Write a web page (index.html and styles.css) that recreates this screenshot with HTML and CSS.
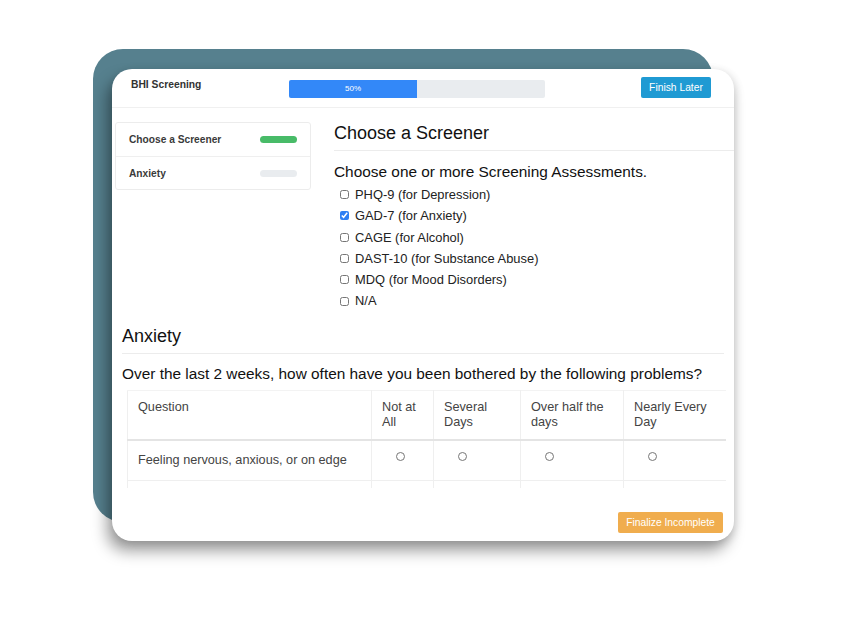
FILE: index.html
```html
<!DOCTYPE html>
<html lang="en">

<head>
    <meta charset="UTF-8">
    <meta name="viewport" content="width=device-width, initial-scale=1.0">
    <title>BHI Screening</title>
    <link rel="stylesheet" href="styles.css">
</head>

<body>

    <div class="stage">
        <div class="card">

            <header class="top">
                <div class="brand">BHI Screening</div>
                <div class="progress">
                    <div class="progress-fill" style="width: 50%">50%</div>
                </div>
                <button class="btn btn-info">Finish Later</button>
            </header>

            <div class="upper">
                <ul class="steps">
                    <li>
                        <span>Choose a Screener</span>
                        <i class="bar done"></i>
                    </li>
                    <li>
                        <span>Anxiety</span>
                        <i class="bar"></i>
                    </li>
                </ul>

                <div class="screener">
                    <h2>Choose a Screener</h2>
                    <p class="lead">Choose one or more Screening Assessments.</p>
                    <ul class="checks">
                        <li><label><input type="checkbox"> PHQ-9 (for Depression)</label></li>
                        <li><label><input type="checkbox" checked> GAD-7 (for Anxiety)</label></li>
                        <li><label><input type="checkbox"> CAGE (for Alcohol)</label></li>
                        <li><label><input type="checkbox"> DAST-10 (for Substance Abuse)</label></li>
                        <li><label><input type="checkbox"> MDQ (for Mood Disorders)</label></li>
                        <li><label><input type="checkbox"> N/A</label></li>
                    </ul>
                </div>
            </div>

            <div class="anxiety">
                <h2>Anxiety</h2>
                <p class="lead">Over the last 2 weeks, how often have you been bothered by the following problems?</p>

                <div class="table-wrap">
                    <table>
                        <thead>
                            <tr>
                                <th class="c1">Question</th>
                                <th class="c2">Not at All</th>
                                <th class="c3">Several Days</th>
                                <th class="c4">Over half the days</th>
                                <th class="c5">Nearly Every Day</th>
                            </tr>
                        </thead>
                        <tbody>
                            <tr>
                                <td>Feeling nervous, anxious, or on edge</td>
                                <td class="opt"><input type="radio" name="q1"></td>
                                <td class="opt"><input type="radio" name="q1"></td>
                                <td class="opt"><input type="radio" name="q1"></td>
                                <td class="opt"><input type="radio" name="q1"></td>
                            </tr>
                            <tr>
                                <td></td>
                                <td></td>
                                <td></td>
                                <td></td>
                                <td></td>
                            </tr>
                        </tbody>
                    </table>
                </div>
            </div>

            <div class="bottom">
                <button class="btn btn-warning">Finalize Incomplete</button>
            </div>

        </div>
    </div>

</body>

</html>
```

FILE: styles.css
```css
* {
    padding: 0;
    margin: 0;
    box-sizing: border-box;
}

html,
body {
    height: 100%;
    background: #fff;
}

body {
    font-family: "Liberation Sans", Arial, Helvetica, sans-serif;
    color: #222;
    overflow: hidden;
}

.stage {
    position: relative;
    width: 847px;
    height: 624px;
    padding: 69px 0 0 112px;
}

/* teal card sitting behind */
.stage::before {
    content: "";
    position: absolute;
    left: 93px;
    top: 49px;
    width: 620px;
    height: 473px;
    border-radius: 30px;
    background: #56808e;
}

.card {
    position: relative;
    width: 622px;
    height: 472px;
    background: #fff;
    border-radius: 20px;
    overflow: hidden;
    box-shadow: -5px 10px 15px rgba(0, 0, 0, 0.38), 2px 2px 8px rgba(0, 0, 0, 0.12);
    display: flex;
    flex-direction: column;
}

.top {
    height: 39px;
    flex-shrink: 0;
    border-bottom: 1px solid #f0f0f0;
    display: flex;
    align-items: center;
    padding: 0 23px 0 19px;
}

.brand {
    width: 158px;
    font-size: 10.3px;
    font-weight: bold;
    color: #333;
    align-self: flex-start;
    padding-top: 10px;
}

.progress {
    width: 256px;
    height: 18px;
    margin-top: 1px;
    background: #e9ecef;
    border-radius: 2px;
    overflow: hidden;
}

.progress-fill {
    height: 100%;
    background: #3388f8;
    color: #fff;
    font-size: 8px;
    line-height: 18px;
    text-align: center;
}

.btn {
    border: none;
    border-radius: 2px;
    color: #fff;
    font-family: inherit;
    font-size: 10.3px;
    height: 21px;
    padding: 0 4px;
    white-space: nowrap;
}

.btn-info {
    margin-left: auto;
    margin-top: -1px;
    background: #1f9ad3;
    width: 70px;
}

.btn-warning {
    background: #f0ad4e;
    width: 105px;
}

.upper {
    display: flex;
    padding: 14px 0 0 3px;
}

.steps {
    list-style: none;
    flex-shrink: 0;
    width: 196px;
    height: 68px;
    border: 1px solid #ececec;
    border-radius: 3px;
    margin-right: 23px;
}

.steps li {
    height: 33px;
    display: flex;
    align-items: center;
    justify-content: space-between;
    padding: 0 13px 0 13px;
    font-size: 10.2px;
    font-weight: bold;
    color: #3a3a3a;
}

.steps li + li {
    border-top: 1px solid #efefef;
}

.bar {
    display: block;
    width: 37px;
    height: 7px;
    border-radius: 4px;
    background: #e9ecef;
}

.bar.done {
    background: #48bb68;
}

.screener {
    flex: 1;
}

h2 {
    font-size: 18px;
    font-weight: normal;
    line-height: 22px;
    padding-bottom: 6px;
    border-bottom: 1px solid #ececec;
    color: #111;
}

.lead {
    font-size: 15.4px;
    line-height: 20px;
    color: #111;
    white-space: nowrap;
}

.screener .lead {
    margin-top: 11px;
}

.checks {
    list-style: none;
    margin-top: 2px;
}

.checks li {
    font-size: 12.9px;
    line-height: 21.3px;
    color: #222;
}

.checks label {
    display: flex;
    align-items: center;
}

.checks input {
    width: 9px;
    height: 9px;
    margin: 0 6px 0 6px;
    accent-color: #2f7ff3;
}

.anxiety {
    padding: 13px 10px 0 10px;
}

.anxiety .lead {
    margin-top: 10px;
}

.table-wrap {
    margin: 6px -2px 0 5px;
    height: 98px;
    overflow: hidden;
}

table {
    width: 599px;
    border-collapse: collapse;
    table-layout: fixed;
    font-size: 12.7px;
    color: #444;
}

th,
td {
    border: 1px solid #efefef;
    text-align: left;
    font-weight: normal;
    vertical-align: top;
}

th {
    height: 49px;
    padding: 9px 10px;
    line-height: 15px;
    border-bottom: 2px solid #e4e4e4;
    border-top-color: #f3f3f3;
}

td {
    height: 38px;
    padding: 12px 10px;
    line-height: 15px;
}

.c1 { width: 244px; }
.c2 { width: 62px; }
.c3 { width: 87px; }
.c4 { width: 103px; }
.c5 { width: 103px; }

td.opt {
    padding: 9px 0 0 24px;
}

td.opt input {
    width: 9px;
    height: 9px;
    margin: 0;
}

.bottom {
    margin-top: auto;
    padding: 0 11px 8px 0;
    display: flex;
    justify-content: flex-end;
}
```
